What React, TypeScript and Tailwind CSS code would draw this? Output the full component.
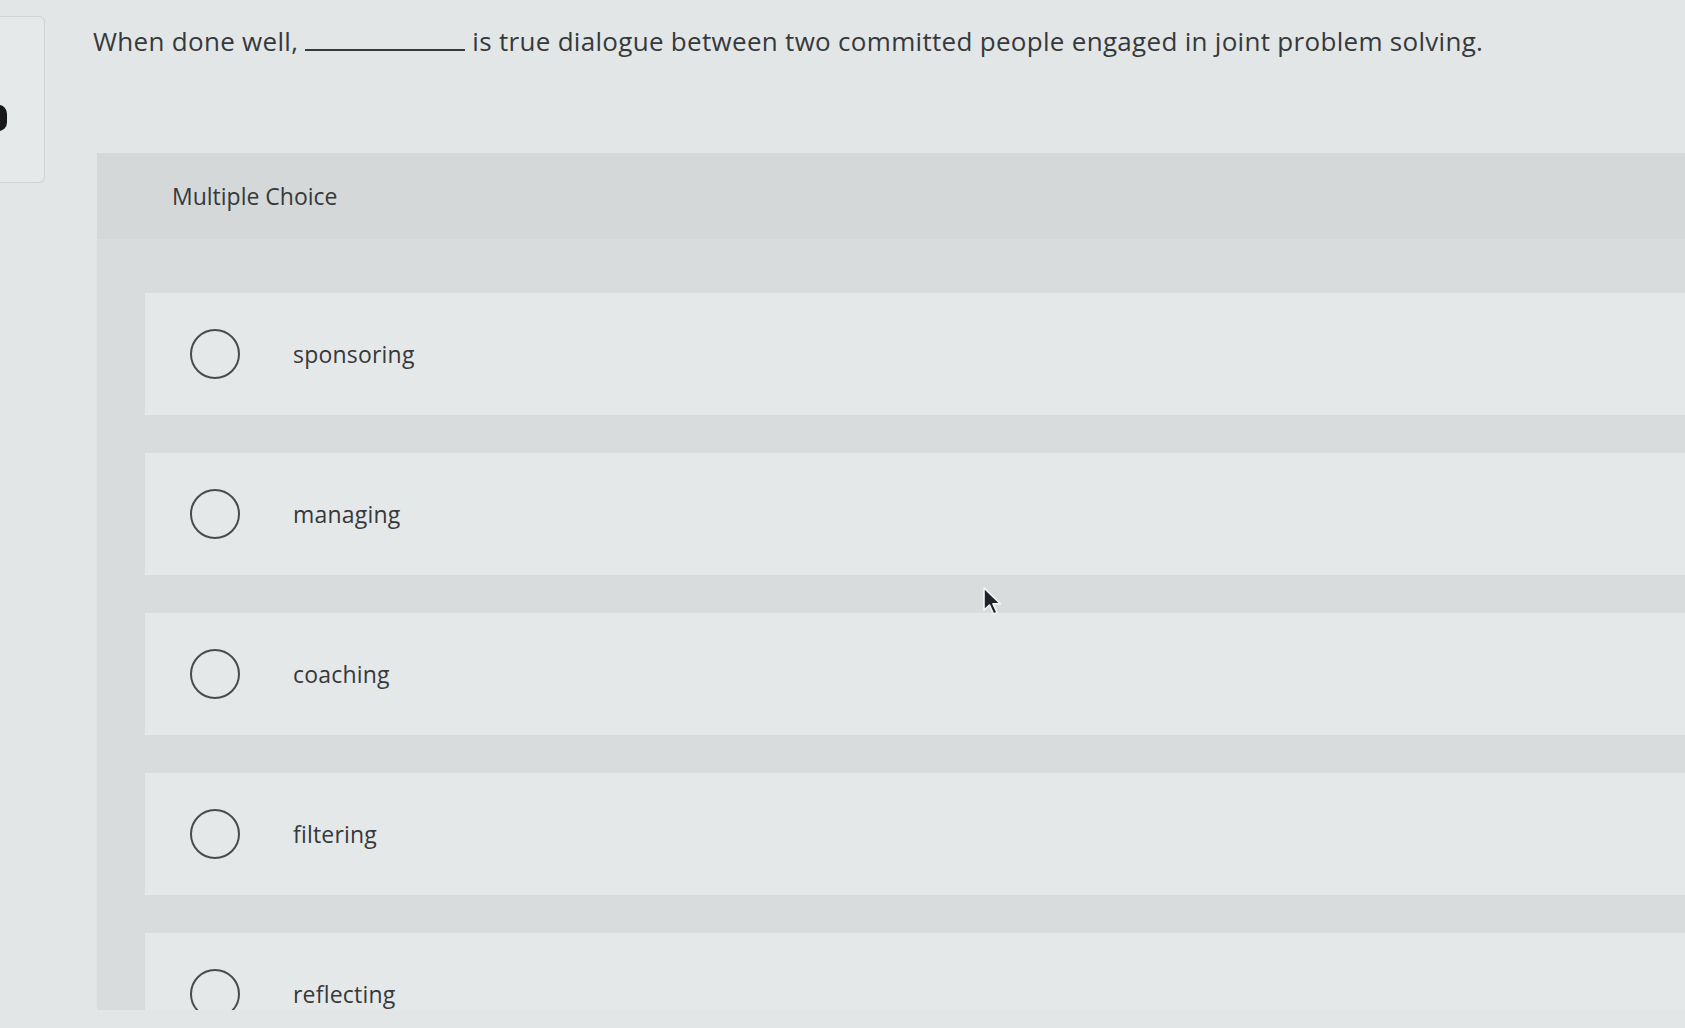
const options = ['sponsoring', 'managing', 'coaching', 'filtering', 'reflecting']

function Cursor() {
  return (
    <svg
      className="absolute left-[982px] top-[586px]"
      width="22"
      height="30"
      viewBox="0 0 22 30"
    >
      <path
        d="M2 2 L2 24 L7.5 19 L11.5 28 L15 26.5 L11 17.8 L18.5 17.8 Z"
        fill="#1f2226"
        stroke="#f4f6f6"
        strokeWidth="1.6"
        strokeLinejoin="round"
      />
    </svg>
  )
}

function Option({ label }: { label: string }) {
  return (
    <div className="flex h-[122px] shrink-0 items-center bg-[#e5e8e8]">
      <div className="ml-[45px] h-[50px] w-[50px] shrink-0 rounded-full border-2 border-[#474b4f]" />
      <span className="ml-[53px] text-[23px] tracking-[0.2px] text-[#36393c]">{label}</span>
    </div>
  )
}

export default function App() {
  return (
    <div
      className="relative flex h-[1028px] w-[1685px] overflow-hidden bg-[#e3e6e6]"
      style={{ fontFamily: '"Open Sans", "Liberation Sans", sans-serif' }}
    >
      {/* left side card */}
      <div className="relative mt-[16px] h-[167px] w-[45px] shrink-0 rounded-r-md border border-l-0 border-[#cfd3d3] bg-[#e6e9e9]">
        <div className="absolute -left-[10px] top-[88px] h-[26px] w-[17px] rounded-full bg-[#16181a]" />
      </div>

      <div className="flex min-w-0 flex-1 flex-col">
        <p className="ml-[48px] mt-[23px] whitespace-nowrap text-[26px] leading-[37px] tracking-[0.3px] text-[#36393c]">
          When done well,{' '}
          <span className="inline-block w-[160px] border-b-2 border-[#36393c] align-baseline" />{' '}
          is true dialogue between two committed people engaged in joint problem solving.
        </p>

        <div className="ml-[52px] mt-[93px] flex h-[857px] flex-col overflow-hidden bg-[#d9dcdc]">
          <div className="flex h-[86px] shrink-0 items-center bg-[#d5d8d8] pl-[75px]">
            <span className="text-[23px] text-[#36393c]">Multiple Choice</span>
          </div>
          <div className="flex flex-col gap-[38px] pl-[48px] pt-[54px]">
            {options.map((o) => (
              <Option key={o} label={o} />
            ))}
          </div>
        </div>
      </div>

      <Cursor />
    </div>
  )
}
